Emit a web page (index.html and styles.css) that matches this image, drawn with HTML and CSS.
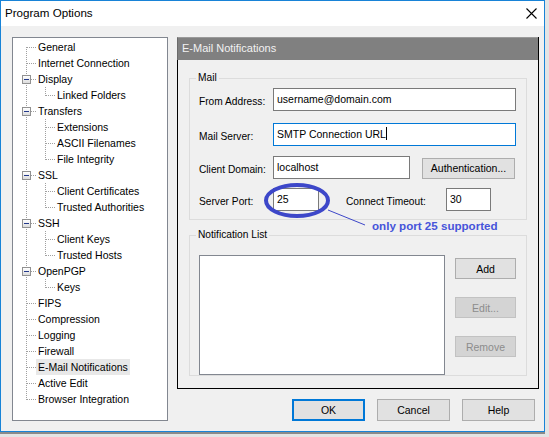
FILE: index.html
```html
<!DOCTYPE html>
<html>
<head>
<meta charset="utf-8">
<title>Program Options</title>
<link rel="stylesheet" href="styles.css">
</head>
<body>
<div class="window">
  <div class="titlebar">
    <span class="title">Program Options</span>
    <svg class="close" width="11" height="11" viewBox="0 0 11 11"><path d="M0.5 0.5 L10.5 10.5 M10.5 0.5 L0.5 10.5" stroke="#000" stroke-width="1.1" fill="none"/></svg>
  </div>
  <div class="content">
    <div class="tree">
      <div class="row"><span class="g g-root r-first"></span><span class="lbl">General</span></div>
      <div class="row"><span class="g g-root r-mid"></span><span class="lbl">Internet Connection</span></div>
      <div class="row"><span class="g g-root r-exp"><span class="exp"></span></span><span class="lbl">Display</span></div>
      <div class="row"><span class="g g-child c-last"></span><span class="lbl">Linked Folders</span></div>
      <div class="row"><span class="g g-root r-exp"><span class="exp"></span></span><span class="lbl">Transfers</span></div>
      <div class="row"><span class="g g-child c-mid"></span><span class="lbl">Extensions</span></div>
      <div class="row"><span class="g g-child c-mid"></span><span class="lbl">ASCII Filenames</span></div>
      <div class="row"><span class="g g-child c-last"></span><span class="lbl">File Integrity</span></div>
      <div class="row"><span class="g g-root r-exp"><span class="exp"></span></span><span class="lbl">SSL</span></div>
      <div class="row"><span class="g g-child c-mid"></span><span class="lbl">Client Certificates</span></div>
      <div class="row"><span class="g g-child c-last"></span><span class="lbl">Trusted Authorities</span></div>
      <div class="row"><span class="g g-root r-exp"><span class="exp"></span></span><span class="lbl">SSH</span></div>
      <div class="row"><span class="g g-child c-mid"></span><span class="lbl">Client Keys</span></div>
      <div class="row"><span class="g g-child c-last"></span><span class="lbl">Trusted Hosts</span></div>
      <div class="row"><span class="g g-root r-exp"><span class="exp"></span></span><span class="lbl">OpenPGP</span></div>
      <div class="row"><span class="g g-child c-last"></span><span class="lbl">Keys</span></div>
      <div class="row"><span class="g g-root r-mid"></span><span class="lbl">FIPS</span></div>
      <div class="row"><span class="g g-root r-mid"></span><span class="lbl">Compression</span></div>
      <div class="row"><span class="g g-root r-mid"></span><span class="lbl">Logging</span></div>
      <div class="row"><span class="g g-root r-mid"></span><span class="lbl">Firewall</span></div>
      <div class="row"><span class="g g-root r-mid"></span><span class="lbl sel">E-Mail Notifications</span></div>
      <div class="row"><span class="g g-root r-mid"></span><span class="lbl">Active Edit</span></div>
      <div class="row"><span class="g g-root r-last"></span><span class="lbl">Browser Integration</span></div>
    </div>

    <div class="panel">
      <div class="panel-head">E-Mail Notifications</div>
      <div class="panel-body">
        <fieldset class="group mail">
          <legend>Mail</legend>
          <div class="frow">
            <span class="flabel">From Address:</span>
            <div class="tb w-wide">username@domain.com</div>
          </div>
          <div class="frow gap12">
            <span class="flabel">Mail Server:</span>
            <div class="tb w-wide focus">SMTP Connection URL<span class="caret"></span></div>
          </div>
          <div class="frow gap10">
            <span class="flabel">Client Domain:</span>
            <div class="tb w-domain">localhost</div>
            <button class="btn auth">Authentication...</button>
          </div>
          <div class="frow gap9">
            <span class="flabel">Server Port:</span>
            <div class="tb w-port">25</div>
            <span class="flabel timeout-label">Connect Timeout:</span>
            <div class="tb w-timeout">30</div>
          </div>
        </fieldset>

        <fieldset class="group notif">
          <legend>Notification List</legend>
          <div class="notif-body">
            <div class="listbox"></div>
            <div class="side-btns">
              <button class="btn side">Add</button>
              <button class="btn side" disabled>Edit...</button>
              <button class="btn side" disabled>Remove</button>
            </div>
          </div>
        </fieldset>
      </div>
    </div>

    <div class="actions">
      <button class="btn dlg default">OK</button>
      <button class="btn dlg">Cancel</button>
      <button class="btn dlg">Help</button>
    </div>
  </div>

  <svg class="annot" width="549" height="437" viewBox="0 0 549 437">
    <ellipse cx="297" cy="200.5" rx="31" ry="15.5" fill="none" stroke="#3d47c9" stroke-width="4"/>
    <line x1="328" y1="210" x2="365" y2="225" stroke="#3d47c9" stroke-width="1"/>
  </svg>
  <span class="note">only port 25 supported</span>
</div>
</body>
</html>
```

FILE: styles.css
```css
:root {
  --dv: repeating-linear-gradient(to bottom, #a0a0a0 0 1px, transparent 1px 2px);
  --dh: repeating-linear-gradient(to right, #a0a0a0 0 1px, transparent 1px 2px);
}

* { box-sizing: border-box; }

html, body {
  margin: 0;
  padding: 0;
}

body {
  background: #e4e4e4;
  width: 549px;
  height: 437px;
  overflow: hidden;
  font-family: "Liberation Sans", Arial, sans-serif;
  font-size: 10.5px;
  color: #000;
}

.window {
  position: relative;
  width: 545px;
  height: 432px;
  border: 1px solid #1883d7;
  background: #f0f0f0;
  box-shadow: 0 2px 0 #8a8a8a;
}

/* title bar */
.titlebar {
  height: 25px;
  background: #fff;
  display: flex;
  align-items: center;
  justify-content: space-between;
  padding: 0 7px 2px 4px;
}
.title {
  font-size: 11.6px;
  color: #000;
}
.close { display: block; margin-top: 1px; }

/* content grid */
.content {
  display: grid;
  grid-template-columns: 156px 362px;
  grid-template-rows: 352px 22px;
  column-gap: 9px;
  row-gap: 10px;
  padding: 11px 0 0 11px;
}

/* tree */
.tree {
  grid-row: 1 / 3;
  background: #fff;
  border: 1px solid #828790;
  padding-top: 1px;
}
.row {
  display: flex;
  height: 16px;
}
.g {
  flex: none;
  height: 16px;
  background-repeat: no-repeat;
}
.g-root { width: 23px; }
.g-child { width: 42px; }

.r-mid {
  background-image: var(--dv), var(--dh);
  background-size: 1px 16px, 9px 1px;
  background-position: 13px 0, 14px 8px;
}
.r-first {
  background-image: var(--dv), var(--dh);
  background-size: 1px 8px, 9px 1px;
  background-position: 13px 8px, 14px 8px;
}
.r-last {
  background-image: var(--dv), var(--dh);
  background-size: 1px 9px, 9px 1px;
  background-position: 13px 0, 14px 8px;
}
.r-exp {
  background-image: var(--dv), var(--dh);
  background-size: 1px 16px, 5px 1px;
  background-position: 13px 0, 18px 8px;
}
.c-mid {
  background-image: var(--dv), var(--dv), var(--dh);
  background-size: 1px 16px, 1px 16px, 9px 1px;
  background-position: 13px 0, 32px 0, 33px 8px;
}
.c-last {
  background-image: var(--dv), var(--dv), var(--dh);
  background-size: 1px 16px, 1px 9px, 9px 1px;
  background-position: 13px 0, 32px 0, 33px 8px;
}

.exp {
  display: block;
  width: 9px;
  height: 9px;
  margin: 4px 0 0 9px;
  border: 1px solid #919191;
  background: linear-gradient(#ffffff, #dcdcdc);
}
.exp::after {
  content: "";
  display: block;
  width: 5px;
  height: 1px;
  margin: 3px 0 0 1px;
  background: #23398a;
}

.lbl {
  padding: 0 2px;
  line-height: 16px;
  white-space: nowrap;
}
.lbl.sel {
  background: #e8e8e8;
}

/* right panel */
.panel {
  display: flex;
  flex-direction: column;
  border: 1px solid #000;
  border-top: none;
}
.panel-head {
  height: 23px;
  background: #808080;
  color: #f2f2f2;
  font-size: 11px;
  padding-left: 4px;
  border-top: 1px solid #9a9a9a;
  margin-left: -1px;
  border-left: 1px solid #6a6a6a;
  line-height: 21px;
}
.panel-body {
  flex: 1;
  padding: 12px 11px 0 11px;
}

.group {
  margin: 0;
  padding: 0 10px 0 9px;
  border: 1px solid #dcdcdc;
  min-width: 0;
}
.group legend {
  font-size: 10.2px;
  line-height: 12px;
  padding: 0 2px;
  margin-left: -3px;
}
.mail { padding-top: 4px; padding-bottom: 8px; }
.notif { margin-top: 9px; padding-top: 14px; padding-bottom: 0; }

.frow {
  display: flex;
  align-items: center;
  height: 23px;
}
.gap12 { margin-top: 12px; }
.gap10 { margin-top: 10px; }
.gap9 { margin-top: 9px; }

.flabel {
  flex: none;
  width: 74px;
  font-size: 10.2px;
  padding-top: 3px;
  white-space: nowrap;
}
.timeout-label {
  width: 100px;
  margin-left: 27px;
}

.tb {
  flex: none;
  height: 23px;
  background: #fff;
  border: 1px solid #7a7a7a;
  padding-left: 3px;
  line-height: 20px;
  white-space: nowrap;
}
.tb.focus { border-color: #0078d7; }
.caret {
  display: inline-block;
  width: 1px;
  height: 13px;
  background: #000;
  vertical-align: -2px;
}
.w-wide { width: 243px; }
.w-domain { width: 137px; }
.w-port { width: 46px; }
.w-timeout { width: 45px; }

/* buttons */
.btn {
  font-family: "Liberation Sans", Arial, sans-serif;
  font-size: 10.5px;
  color: #000;
  background: #e1e1e1;
  border: 1px solid #adadad;
  padding: 0;
  margin: 0;
  height: 21px;
}
.btn:disabled {
  color: #8c8c8c;
  background: #d4d4d4;
  border-color: #c2c2c2;
}
.auth {
  width: 93px;
  margin-left: 12px;
  margin-top: 1px;
}

.notif-body {
  display: flex;
  gap: 10px;
}
.listbox {
  width: 246px;
  height: 120px;
  background: #fff;
  border: 1px solid #828790;
}
.side-btns {
  display: flex;
  flex-direction: column;
  gap: 18px;
  padding-top: 3px;
}
.side { width: 61px; }

.actions {
  grid-column: 2;
  display: flex;
  justify-content: flex-end;
  gap: 12px;
  padding-right: 4px;
}
.dlg {
  width: 73px;
  height: 22px;
}
.dlg.default {
  border: 2px solid #0078d7;
}

/* annotation overlay */
.annot {
  position: absolute;
  left: -1px;
  top: -1px;
  pointer-events: none;
}
.note {
  position: absolute;
  left: 371px;
  top: 217px;
  font-size: 11.6px;
  font-weight: bold;
  line-height: 15px;
  color: #4654da;
  white-space: nowrap;
}
```
